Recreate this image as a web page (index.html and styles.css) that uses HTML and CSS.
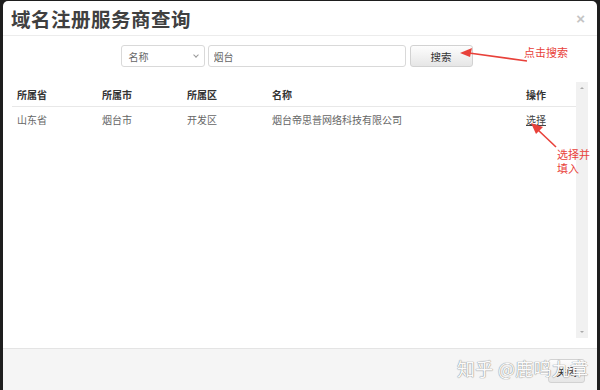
FILE: index.html
```html
<!DOCTYPE html>
<html lang="zh-CN">
<head>
    <meta charset="UTF-8">
    <title>域名注册服务商查询</title>
    <link rel="stylesheet" href="styles.css">
</head>
<body>
    <div class="modal">
        <div class="modal-header">
            <h3>域名注册服务商查询</h3>
            <span class="close">&times;</span>
        </div>

        <div class="modal-body">
            <div class="search-row">
                <div class="select">名称<span class="caret"></span></div>
                <input type="text" class="search-input" value="烟台">
                <button class="btn">搜索</button>
            </div>

            <div class="result">
                <div class="table-wrap">
                    <table>
                        <thead>
                            <tr>
                                <th class="c1">所属省</th>
                                <th class="c2">所属市</th>
                                <th class="c3">所属区</th>
                                <th class="c4">名称</th>
                                <th>操作</th>
                            </tr>
                        </thead>
                        <tbody>
                            <tr>
                                <td>山东省</td>
                                <td>烟台市</td>
                                <td>开发区</td>
                                <td>烟台帝思普网络科技有限公司</td>
                                <td><a href="#">选择</a></td>
                            </tr>
                        </tbody>
                    </table>
                </div>
                <div class="scrollbar">
                    <span class="arrow up"></span>
                    <span class="arrow down"></span>
                </div>
            </div>
        </div>

        <div class="modal-footer">
            <button class="btn btn-close">关闭</button>
        </div>

        <!-- annotations drawn over the screenshot -->
        <span class="note note-search">点击搜索</span>
        <span class="note note-select">选择并<br>填入</span>
        <svg class="arrows" width="594" height="390" viewBox="0 0 594 390">
            <line x1="524" y1="60" x2="466" y2="52" stroke="#e8413a" stroke-width="1.6"/>
            <polygon points="457,52 469,47 467,56" fill="#e8413a"/>
            <line x1="553" y1="146" x2="534" y2="128" stroke="#e8413a" stroke-width="1.6"/>
            <polygon points="528,122 540,126 533,133" fill="#e8413a"/>
        </svg>

        <span class="watermark">知乎 @鹿鸣九章</span>
    </div>
</body>
</html>
```

FILE: styles.css
```css
body {
    margin: 0;
    background-color: #1e1e1e;
    font-family: "Noto Sans CJK SC", "Noto Sans", sans-serif;
    height: 390px;
    overflow: hidden;
}

.modal {
    position: relative;
    width: 594px;
    height: 400px;
    margin: 1px 0 0 3px;
    background-color: #fff;
    border-radius: 5px;
    display: flex;
    flex-direction: column;
}

.modal-header {
    height: 34px;
    padding: 0 12px 0 8px;
    border-bottom: 1px solid #ececec;
    display: flex;
    align-items: center;
    justify-content: space-between;
}

.modal-header h3 {
    margin: 0;
    font-size: 19.5px;
    font-weight: bold;
    color: #404040;
    letter-spacing: 0.5px;
}

.close {
    font-size: 15px;
    color: #c4c4c4;
    font-weight: bold;
    font-family: "Liberation Sans", sans-serif;
}

.modal-body {
    padding: 9px 9px 0 8px;
    display: flex;
    flex-direction: column;
}

.search-row {
    display: flex;
    justify-content: center;
    gap: 3px;
    padding-right: 6px;
    height: 22px;
}

.select,
.search-input {
    box-sizing: border-box;
    height: 22px;
    border: 1px solid #d9d9d9;
    border-radius: 3px;
    font-size: 10px;
    color: #666;
    font-family: inherit;
    background: #fff;
}

.select {
    width: 84px;
    padding-left: 7px;
    display: flex;
    align-items: center;
    position: relative;
}

.caret {
    position: absolute;
    right: 6px;
    top: 7px;
    width: 3px;
    height: 3px;
    border-right: 1px solid #999;
    border-bottom: 1px solid #999;
    transform: rotate(45deg);
}

.search-input {
    width: 198px;
    padding: 0 5px;
    outline: none;
}

.btn {
    height: 22px;
    width: 63px;
    margin-left: 1px;
    border: 1px solid #d2d2d2;
    border-radius: 3px;
    background: linear-gradient(#fdfdfd, #e6e6e6);
    font-size: 10.5px;
    color: #333;
    font-family: inherit;
    padding: 0;
}

.result {
    margin-top: 15px;
    display: flex;
    height: 256px;
}

.table-wrap {
    flex: 1;
    padding-left: 1px;
}

table {
    width: 100%;
    border-collapse: collapse;
    font-size: 10px;
}

th {
    text-align: left;
    font-weight: bold;
    color: #333;
    height: 24px;
    padding: 0 0 0 5px;
    border-bottom: 1px solid #e8e8e8;
}

td {
    color: #666;
    height: 24px;
    padding: 0 0 0 5px;
}

.c1, .c2, .c3 {
    width: 80px;
}

.c4 {
    width: 249px;
}

td a {
    color: #444;
}

.scrollbar {
    width: 12px;
    background-color: #f1f1f1;
    position: relative;
}

.arrow {
    position: absolute;
    left: 4px;
    width: 0;
    height: 0;
    border-left: 2px solid transparent;
    border-right: 2px solid transparent;
}

.arrow.up {
    top: 5px;
    border-bottom: 2px solid #aaa;
}

.arrow.down {
    bottom: 5px;
    border-top: 2px solid #aaa;
}

.modal-footer {
    margin-top: 10px;
    flex: 1;
    border-top: 1px solid #e4e4e4;
    background-color: #f5f5f5;
    display: flex;
    justify-content: flex-end;
    align-items: flex-start;
    padding: 10px 12px 0 0;
}

.btn-close {
    width: 37px;
    height: 24px;
    margin: 0;
}

.note {
    position: absolute;
    color: #e8413a;
    font-size: 11px;
    line-height: 14px;
}

.note-search {
    left: 521px;
    top: 44px;
}

.note-select {
    left: 554px;
    top: 146px;
}

.arrows {
    position: absolute;
    left: 0;
    top: 0;
    pointer-events: none;
}

.watermark {
    position: absolute;
    left: 454px;
    top: 354px;
    font-size: 18px;
    color: #fbfbfb;
    letter-spacing: 0.3px;
    text-shadow: 0 0 1px #8a8a8a, 0 0 1px #8a8a8a;
}
```
